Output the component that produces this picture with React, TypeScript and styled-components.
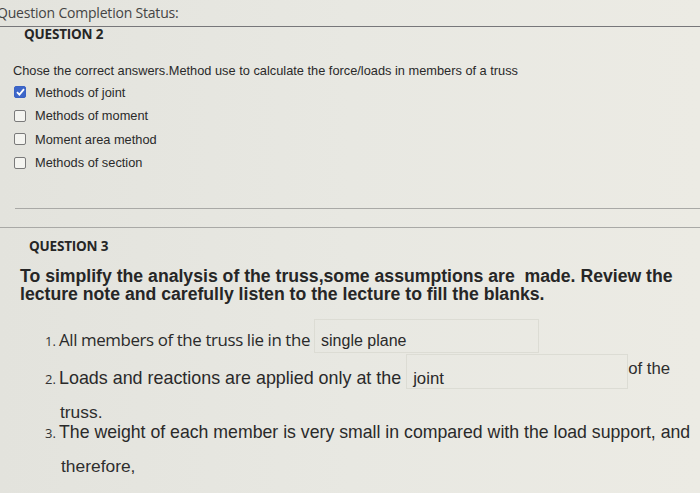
import React from "react";
import styled, { createGlobalStyle } from "styled-components";

const GlobalStyle = createGlobalStyle`
  html, body {
    margin: 0;
    padding: 0;
    background: #e6e6e0;
  }
`;

const Page = styled.div`
  width: 700px;
  height: 493px;
  overflow: hidden;
  background: linear-gradient(90deg, #e3e3dd 0%, #e8e8e2 50%, #ecebe4 100%);
  color: #2e2e2e;
  font-family: "Liberation Sans", Arial, sans-serif;
`;

const StatusBar = styled.div`
  height: 27px;
  border-bottom: 1px solid #77777a;
  box-sizing: border-box;
  padding: 3px 0 0;
  margin-left: -3px;
  font-family: "Open Sans", sans-serif;
  font-size: 14px;
  color: #444;
  letter-spacing: -0.2px;
`;

const QuestionTitle = styled.div<{ $left: number; $top: number }>`
  font-family: "Open Sans", sans-serif;
  font-weight: 700;
  font-size: 13.5px;
  color: #262626;
  margin: ${(p) => p.$top}px 0 0 ${(p) => p.$left}px;
  letter-spacing: -0.2px;
`;

const Prompt = styled.div`
  font-size: 12.8px;
  margin: 20px 0 0 13px;
  color: #2a2a2a;
`;

const Options = styled.div`
  display: flex;
  flex-direction: column;
  gap: 9.5px;
  margin: 7px 0 0 14px;
`;

const Option = styled.label`
  display: flex;
  align-items: center;
  gap: 9px;
  font-size: 12.8px;
  height: 14px;
  color: #2a2a2a;
`;

const Box = styled.span<{ $checked?: boolean }>`
  width: 12px;
  height: 12px;
  box-sizing: border-box;
  border-radius: 2px;
  border: 1px solid ${(p) => (p.$checked ? "#3a62c4" : "#7a7a7a")};
  background: ${(p) => (p.$checked ? "#3d66c9" : "#f4f4f0")};
  display: flex;
  align-items: center;
  justify-content: center;
`;

const Rule = styled.div<{ $top: number; $left: number }>`
  height: 1px;
  background: #a9a9a6;
  margin: ${(p) => p.$top}px 0 0 ${(p) => p.$left}px;
`;

const Lead = styled.div`
  font-weight: 700;
  font-size: 17.65px;
  line-height: 18.5px;
  margin: 12px 0 0 20px;
  color: #262626;
`;

const Items = styled.ol`
  list-style: none;
  margin: 0;
  padding: 0 0 0 45px;
`;

const Item = styled.li<{ $top: number }>`
  display: flex;
  flex-wrap: wrap;
  align-items: baseline;
  margin-top: ${(p) => p.$top}px;
  line-height: 18px;
`;

const Num = styled.span<{ $size: number }>`
  font-family: "Open Sans", sans-serif;
  font-size: ${(p) => p.$size}px;
  color: #333;
  width: 14px;
`;

const Calibri = styled.span`
  font-family: "Open Sans", sans-serif;
  font-size: 16.9px;
  letter-spacing: -0.4px;
  color: #2a2a2a;
`;

const Body = styled.span<{ $size: number }>`
  font-size: ${(p) => p.$size}px;
  color: #2a2a2a;
`;

const Blank = styled.span<{ $w: number; $h: number; $size: number; $pad: number }>`
  display: inline-block;
  box-sizing: border-box;
  width: ${(p) => p.$w}px;
  height: ${(p) => p.$h}px;
  border: 1px solid #dcdcd4;
  padding: ${(p) => p.$pad}px 0 0 6px;
  font-size: ${(p) => p.$size}px;
  color: #2a2a2a;
`;

const Raised = styled.span`
  font-size: 16.8px;
  align-self: flex-start;
  margin-top: 6px;
`;

const Wrap = styled.div<{ $left: number; $top: number }>`
  flex-basis: 100%;
  padding-left: ${(p) => p.$left}px;
  margin-top: ${(p) => p.$top}px;
  font-size: 17.4px;
`;

const Check = () => (
  <svg width="9" height="8" viewBox="0 0 9 8">
    <path d="M1 4.2 L3.4 6.6 L8 1.2" fill="none" stroke="#fff" strokeWidth="1.8" />
  </svg>
);

const options = [
  { label: "Methods of joint", checked: true },
  { label: "Methods of moment", checked: false },
  { label: "Moment area method", checked: false },
  { label: "Methods of section", checked: false },
];

export default function App() {
  return (
    <Page>
      <GlobalStyle />
      <StatusBar>Question Completion Status:</StatusBar>
      <QuestionTitle $left={24} $top={-2}>
        QUESTION 2
      </QuestionTitle>
      <Prompt>
        Chose the correct answers.Method use to calculate the force/loads in
        members of a truss
      </Prompt>
      <Options>
        {options.map((o) => (
          <Option key={o.label}>
            <Box $checked={o.checked}>{o.checked && <Check />}</Box>
            {o.label}
          </Option>
        ))}
      </Options>
      <Rule $top={38} $left={15} />
      <Rule $top={18} $left={0} />
      <QuestionTitle $left={29} $top={9}>
        QUESTION 3
      </QuestionTitle>
      <Lead>
        To simplify the analysis of the truss,some assumptions are&nbsp; made.
        Review the lecture note and carefully listen to the lecture to fill the
        blanks.
      </Lead>
      <Items>
        <Item $top={15}>
          <Num $size={13}>1.</Num>
          <Calibri>All members of the truss lie in the&nbsp;</Calibri>
          <Blank $w={225} $h={34} $size={16} $pad={12}>
            single plane
          </Blank>
        </Item>
        <Item $top={1}>
          <Num $size={13}>2.</Num>
          <Body $size={17.9}>Loads and reactions are applied only at the&nbsp;</Body>
          <Blank $w={222} $h={35} $size={16.8} $pad={15}>
            joint
          </Blank>
          <Raised>of the</Raised>
          <Wrap $left={15} $top={14}>
            truss.
          </Wrap>
        </Item>
        <Item $top={2}>
          <Num $size={13}>3.</Num>
          <Body $size={17.7}>
            The weight of each member is very small in compared with the load
            support, and
          </Body>
          <Wrap $left={16} $top={15}>
            therefore,
          </Wrap>
        </Item>
      </Items>
    </Page>
  );
}
